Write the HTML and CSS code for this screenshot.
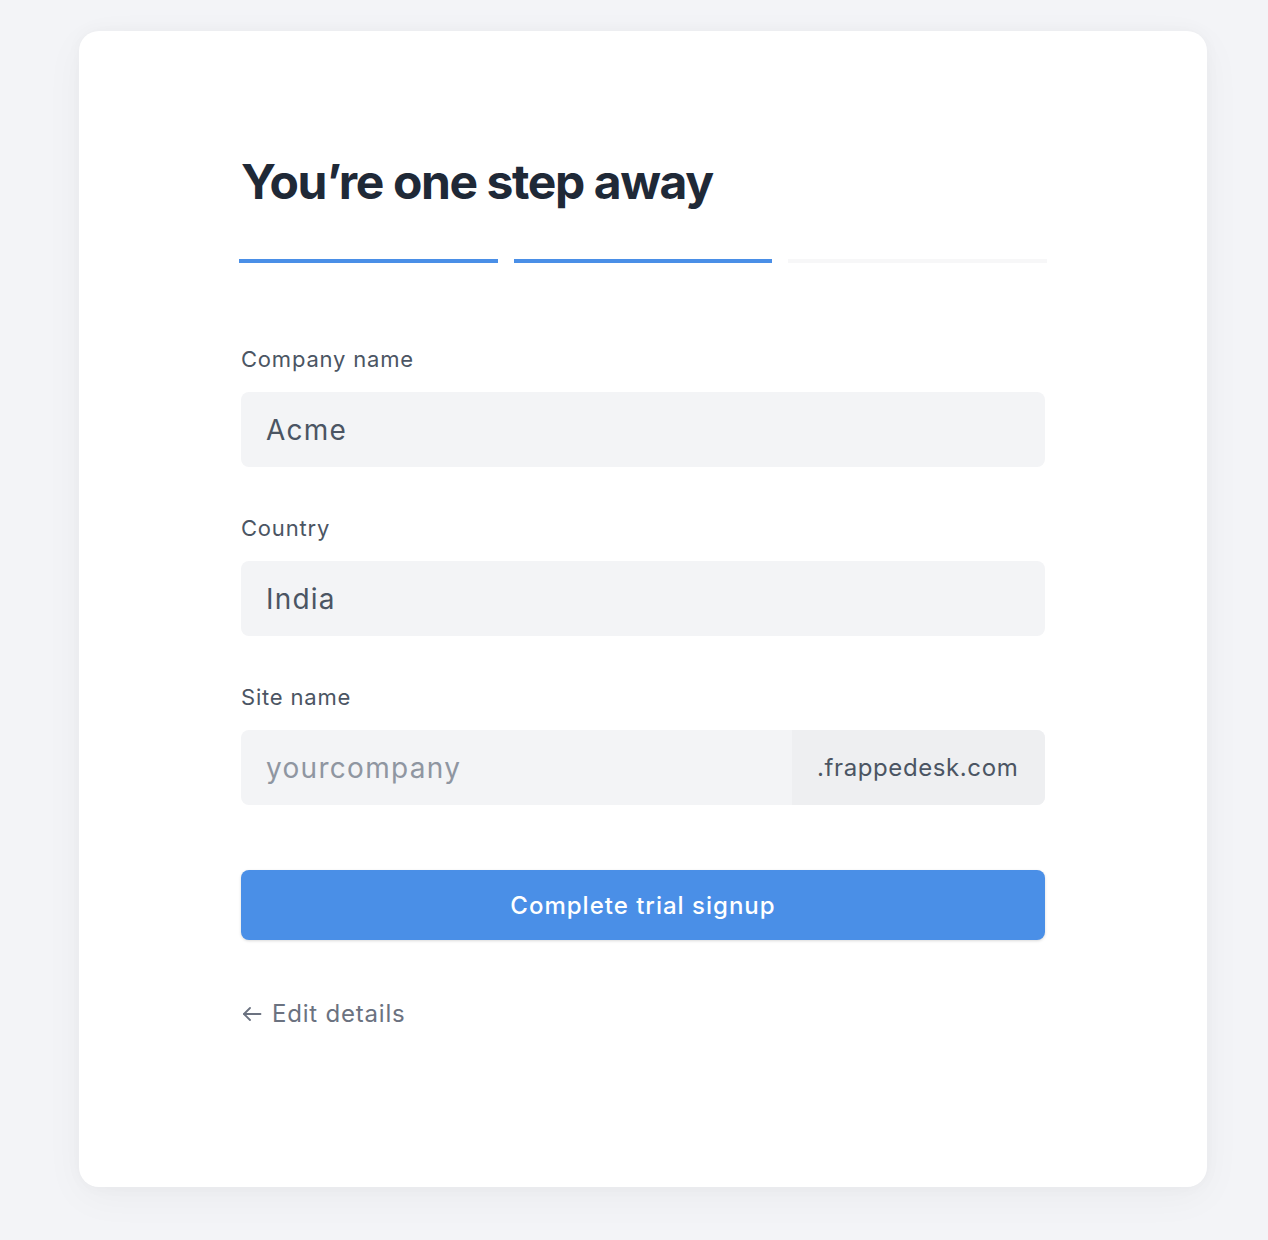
FILE: index.html
```html
<!DOCTYPE html>
<html lang="en">
<head>
<meta charset="utf-8">
<title>Signup</title>
<link rel="stylesheet" href="styles.css">
</head>
<body>
<main class="card">
  <h1 class="title">You’re one step away</h1>
  <div class="steps">
    <span class="step done"></span>
    <span class="step done"></span>
    <span class="step"></span>
  </div>
  <form class="form">
    <div class="field">
      <label class="label">Company name</label>
      <div class="input">Acme</div>
    </div>
    <div class="field">
      <label class="label">Country</label>
      <div class="input">India</div>
    </div>
    <div class="field">
      <label class="label">Site name</label>
      <div class="input split">
        <span class="placeholder">yourcompany</span>
        <span class="suffix">.frappedesk.com</span>
      </div>
    </div>
    <button type="button" class="btn">Complete trial signup</button>
    <a class="back" href="#"><svg class="arrow" width="20" height="20" viewBox="0 0 20 20" fill="none" stroke="currentColor" stroke-width="1.8" stroke-linecap="round" stroke-linejoin="round"><path d="M18.5 10H2"/><path d="M8 4L2 10L8 16"/></svg><span>Edit details</span></a>
  </form>
</main>
</body>
</html>
```
FILE: styles.css
```css
* { box-sizing: border-box; }
html, body { margin: 0; padding: 0; }
body {
  background: #f3f4f7;
  font-family: Inter, "Noto Sans", sans-serif;
  padding: 31px 61px 53px 79px;
}
.card {
  background: #ffffff;
  border-radius: 20px;
  box-shadow: 0 10px 40px rgba(0, 0, 0, 0.04), 0 0 16px rgba(0,0,0,0.03);
  padding: 122px 162px 140px;
  min-height: 1156px;
}
.title {
  margin: 0;
  font-size: 48px;
  line-height: 58px;
  font-weight: 700;
  color: #1f2937;
  letter-spacing: -1.4px;
}
.steps {
  margin: 48px -2px 0;
  display: flex;
  gap: 16px;
}
.step {
  flex: 1;
  height: 4px;
  background: #f7f7f8;
}
.step.done { background: #4a8fe7; }
.form { margin-top: 82px; display: flex; flex-direction: column; }
.field { display: flex; flex-direction: column; margin-bottom: 47px; }
.field:last-of-type { margin-bottom: 0; }
.label {
  font-size: 22px;
  line-height: 28px;
  color: #4b5563;
  letter-spacing: 0.8px;
  margin-bottom: 19px;
}
.input {
  height: 75px;
  background: #f3f4f6;
  border-radius: 8px;
  padding: 0 25px;
  display: flex;
  align-items: center;
  font-size: 28px;
  letter-spacing: 1.2px;
  color: #4b5563;
}
.input.split { padding: 0; overflow: hidden; }
.placeholder { flex: 1; padding-left: 25px; color: #8f96a1; letter-spacing: 1.3px; }
.suffix {
  align-self: stretch;
  display: flex;
  align-items: center;
  width: 253px;
  padding-left: 25px;
  background: #eeeff1;
  font-size: 24px;
  letter-spacing: 0.6px;
  color: #4b5563;
}
.btn {
  margin-top: 65px;
  height: 70px;
  border: 0;
  border-radius: 8px;
  background: #4a8fe7;
  color: #ffffff;
  font-family: inherit;
  font-size: 24px;
  font-weight: 500;
  letter-spacing: 1px;
  box-shadow: 0 1px 3px rgba(0,0,0,0.15);
}
.back {
  margin-top: 58px;
  display: flex;
  align-items: center;
  gap: 10px;
  font-size: 24px;
  line-height: 32px;
  letter-spacing: 0.8px;
  color: #6b7280;
  text-decoration: none;
}
.arrow { flex: none; margin-left: 1px; }
```
